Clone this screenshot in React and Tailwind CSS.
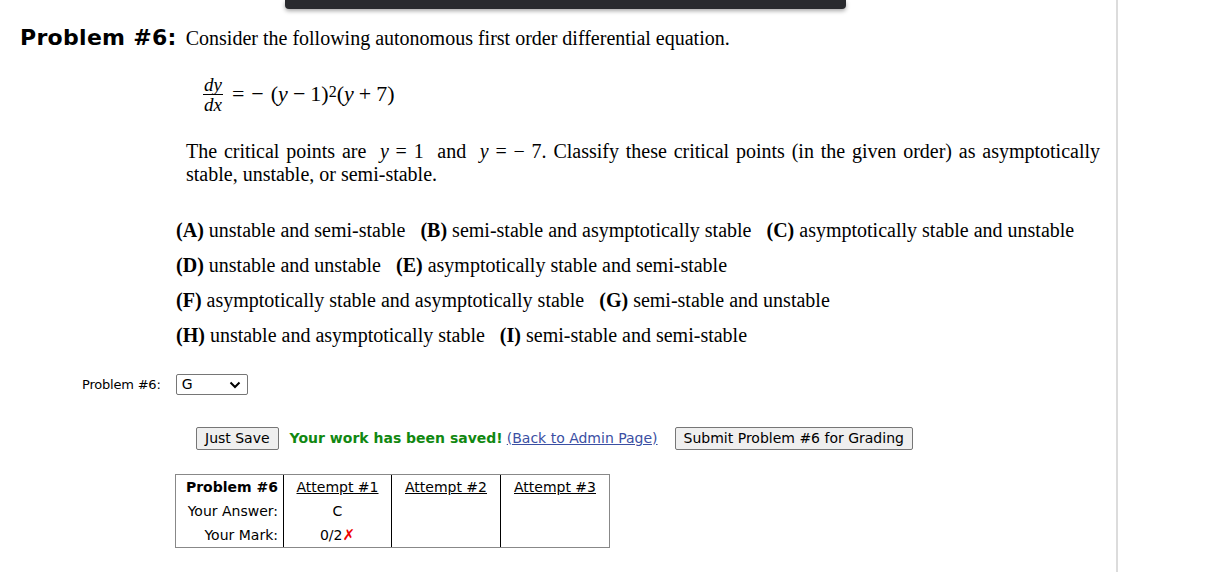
import React from "react";

const verdana = "font-['DejaVu_Sans',Verdana,sans-serif]";
const serif = "font-['Liberation_Serif','Times_New_Roman',serif]";

const options = [
  [
    ["A", "unstable and semi-stable"],
    ["B", "semi-stable and asymptotically stable"],
    ["C", "asymptotically stable and unstable"],
  ],
  [
    ["D", "unstable and unstable"],
    ["E", "asymptotically stable and semi-stable"],
  ],
  [
    ["F", "asymptotically stable and asymptotically stable"],
    ["G", "semi-stable and unstable"],
  ],
  [
    ["H", "unstable and asymptotically stable"],
    ["I", "semi-stable and semi-stable"],
  ],
];

function Var({ children }) {
  return <i className="italic">{children}</i>;
}

export default function App() {
  return (
    <div className="relative w-[1207px] h-[572px] bg-white overflow-hidden text-black">
      {/* dark toolbar peeking from the top */}
      <div className="absolute left-[285px] top-0 w-[561px] h-[9px] bg-[#292a2e] rounded-b-[4px] shadow-[0_2px_4px_rgba(0,0,0,0.35)]" />

      <div className="w-[1118px] h-full border-r-2 border-[#dcdcdc]">
        {/* heading */}
        <div className="flex items-baseline pt-[21px] pl-[20px]">
          <span className={`${verdana} font-bold text-[22px] tracking-[0.3px]`}>Problem #6:</span>
          <span className={`${serif} text-[20px] ml-[9px]`}>
            Consider the following autonomous first order differential equation.
          </span>
        </div>

        {/* equation */}
        <div className={`${serif} flex items-center pl-[203px] mt-[22px] text-[22px]`}>
          <span className="flex flex-col items-center leading-[17px] text-[19px]">
            <span className="px-[1px] border-b border-black pb-[1px]">
              <Var>dy</Var>
            </span>
            <span className="pt-[1px]">
              <Var>dx</Var>
            </span>
          </span>
          <span className="ml-[9px] mb-[2px] flex items-baseline">
            <span>=</span>
            <span className="ml-[7px]">−</span>
            <span className="ml-[7px]">(</span>
            <Var>y</Var>
            <span className="mx-[5px]">−</span>
            <span>1)</span>
            <sup className="text-[16px] relative -top-[4px]">2</sup>
            <span>(</span>
            <Var>y</Var>
            <span className="mx-[5px]">+</span>
            <span>7)</span>
          </span>
        </div>

        {/* paragraph */}
        <p className={`${serif} text-[20px] leading-[23px] ml-[186px] w-[914px] mt-[27px] text-justify`}>
          The critical points are&nbsp; <Var>y</Var> = 1&nbsp; and&nbsp; <Var>y</Var> = − 7. Classify these critical
          points (in the given order) as asymptotically stable, unstable, or semi-stable.
        </p>

        {/* options */}
        <div className={`${serif} text-[20px] ml-[176px] mt-[33px] flex flex-col gap-[12px] leading-[23px]`}>
          {options.map((row, i) => (
            <div key={i} className="flex gap-[15px]">
              {row.map(([k, t]) => (
                <span key={k}>
                  <b className="font-bold">({k})</b> {t}
                </span>
              ))}
            </div>
          ))}
        </div>

        {/* answer select */}
        <div className={`${verdana} flex items-center text-[13px] mt-[27px] ml-[82px]`}>
          <span className="tracking-[-0.2px]">Problem #6:</span>
          <div className="ml-[15px] w-[72px] h-[21px] border border-[#767676] rounded-[2px] flex items-center justify-between px-[5px] text-[14px]">
            <span>G</span>
            <svg width="12" height="8" viewBox="0 0 12 8" className="mr-[1px]">
              <path d="M1.5 1.5 L6 6 L10.5 1.5" fill="none" stroke="black" strokeWidth="2" />
            </svg>
          </div>
        </div>

        {/* actions */}
        <div className={`${verdana} flex items-center text-[14px] mt-[32px] ml-[196px]`}>
          <button className="h-[23px] px-[8px] border border-[#767676] rounded-[2px] bg-[#efefef] text-[14px]">
            Just Save
          </button>
          <span className="ml-[11px] font-bold text-[#118811]">Your work has been saved!</span>
          <a className="ml-[4px] text-[#3b4fa3] underline">(Back to Admin Page)</a>
          <button className="ml-[17px] h-[23px] px-[8px] border border-[#767676] rounded-[2px] bg-[#efefef] text-[14px]">
            Submit Problem #6 for Grading
          </button>
        </div>

        {/* attempts table */}
        <div className={`${verdana} text-[14px] ml-[175px] mt-[24px]`}>
          <div className="flex w-[435px] border border-[#888]">
            <div className="w-[108px] flex flex-col items-end pr-[5px] border-r border-black">
              <div className="h-[24px] flex items-center font-bold">Problem #6</div>
              <div className="h-[24px] flex items-center">Your Answer:</div>
              <div className="h-[24px] flex items-center">Your Mark:</div>
            </div>
            <div className="w-[108px] flex flex-col items-center border-r border-black">
              <div className="h-[24px] flex items-center underline">Attempt #1</div>
              <div className="h-[24px] flex items-center">C</div>
              <div className="h-[24px] flex items-center">
                0/2<span className="text-[#ee0000] font-bold text-[15px]">✗</span>
              </div>
            </div>
            <div className="w-[109px] flex flex-col items-center border-r border-black">
              <div className="h-[24px] flex items-center underline">Attempt #2</div>
            </div>
            <div className="flex-1 flex flex-col items-center">
              <div className="h-[24px] flex items-center underline">Attempt #3</div>
            </div>
          </div>
        </div>
      </div>
    </div>
  );
}
